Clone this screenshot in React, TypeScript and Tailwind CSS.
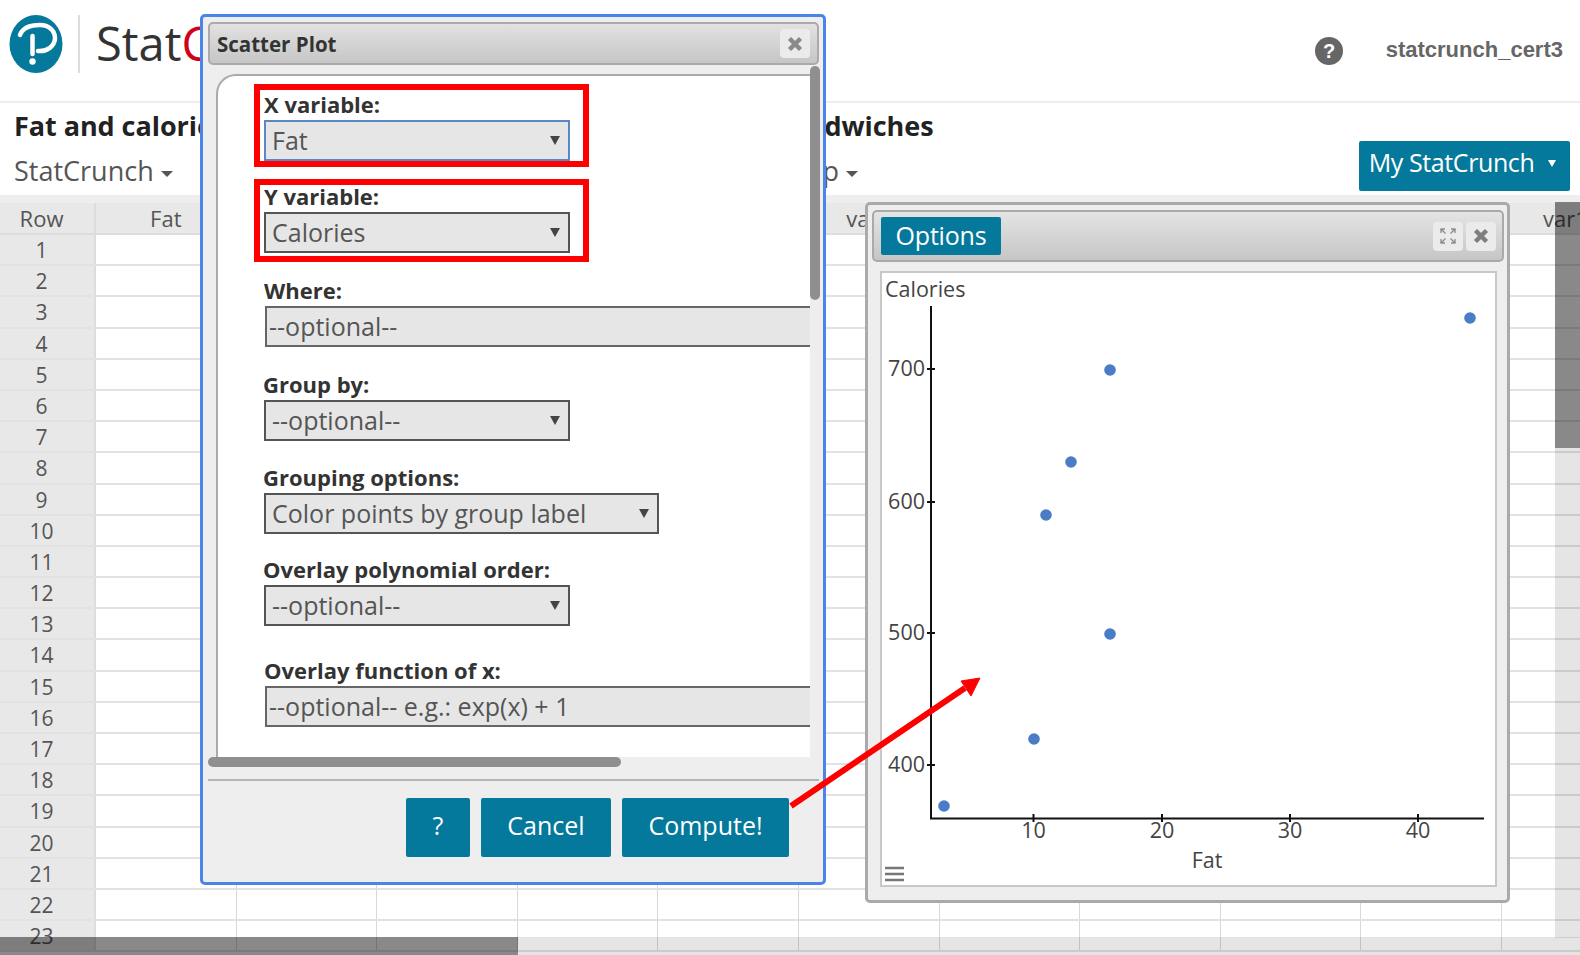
const rows = Array.from({ length: 23 }, (_, i) => i + 1);
const cols = ["Fat", "Calories", "var3", "var4", "var5", "var6", "var7", "var8", "var9", "var10", "var11"];
const points = [
  [1470, 318],
  [1110, 370],
  [1071, 462],
  [1046, 515],
  [1110, 634],
  [1034, 739],
  [944, 806],
];

function Caret() {
  return <span className="ml-[7px] inline-block border-x-[6px] border-t-[6px] border-x-transparent border-t-[#555] align-middle" />;
}

function CloseX({ color = "#8a8a8a" }: { color?: string }) {
  return (
    <svg width="16" height="16" viewBox="0 0 16 16">
      <path d="M2.5 2.5 13.5 13.5M13.5 2.5 2.5 13.5" stroke={color} strokeWidth="4.5" />
    </svg>
  );
}

function Field({ label, value, className, width, arrow = true, focus = false, boxed = false }: { label: string; value: string; className?: string; width?: string; arrow?: boolean; focus?: boolean; boxed?: boolean }) {
  return (
    <div className={className}>
      <div className={`h-[25px] text-[22px] leading-[19px] font-bold text-[#333] whitespace-nowrap ${boxed ? "" : "-ml-[1px]"}`}>{label}</div>
      <div
        className={`flex h-[41px] items-center justify-between bg-[#e6e6e6] pl-[6px] pr-[8px] text-[25px] text-[#555] whitespace-nowrap ${width ?? "w-[306px]"} ${
          focus ? "border-2 border-[#5b86c8]" : arrow ? "border-2 border-[#555]" : "border-y-2 border-l-2 border-y-[#666] border-l-[#666]"
        }`}
      >
        <span className={arrow ? "" : "-ml-[4px]"}>{value}</span>
        {arrow && <span className="border-x-[5px] border-t-[9px] border-x-transparent border-t-[#444]" />}
      </div>
    </div>
  );
}

function RedBox({ className, children }: { className?: string; children: React.ReactNode }) {
  return <div className={`h-[83px] w-[335px] border-[6px] border-[#ff0000] pl-[4px] ${className ?? ""}`}>{children}</div>;
}

function DialogButton({ label, width }: { label: string; width: string }) {
  return <div className={`flex h-[59px] items-center justify-center rounded-[2px] bg-[#04799b] pb-[3px] text-[25px] text-white ${width}`}>{label}</div>;
}

export default function App() {
  return (
    <div className="relative h-[955px] w-[1580px] overflow-hidden bg-white font-['Open_Sans',sans-serif]">
      {/* Header */}
      <div className="flex h-[103px] items-center border-b-2 border-[#eee] pb-[14px]">
        <svg className="ml-[9px]" width="54" height="60" viewBox="0 0 54 60">
          <ellipse cx="27" cy="30" rx="26.5" ry="29" fill="#04799b" />
          <path d="M11 21C14 13 23 11 31 11 40 11 46 17 46 24 46 32 38 38 29 37" fill="none" stroke="#fff" strokeWidth="4.5" strokeLinecap="round" />
          <path d="M23.5 22V40" fill="none" stroke="#fff" strokeWidth="4.5" strokeLinecap="round" />
          <circle cx="23.5" cy="47.5" r="3.2" fill="#fff" />
        </svg>
        <div className="ml-[15px] h-[58px] w-[2px] bg-[#ddd]" />
        <div className="ml-[16px] text-[47px] leading-none font-normal text-[#333]">
          Stat<span className="text-[#d0021b]">Crunch</span>
        </div>
        <div className="ml-auto mt-[12px] flex items-center">
          <svg className="mt-[2px]" width="30" height="28" viewBox="0 0 30 28">
            <ellipse cx="15" cy="14" rx="14" ry="14" fill="#666" />
            <text x="15" y="21" textAnchor="middle" fill="#fff" fontSize="20" fontWeight="700" fontFamily="Liberation Sans">?</text>
          </svg>
          <span className="ml-[42px] mr-[17px] font-['Liberation_Sans',sans-serif] text-[22px] font-bold text-[#666]">statcrunch_cert3</span>
        </div>
      </div>

      {/* Title and menu */}
      <div className="relative h-[92px]">
        <div className="pl-[14px] pt-[3px] text-[27px] leading-[40px] font-bold tracking-[-0.05px] text-[#222] whitespace-nowrap">Fat and calories for a sample of fast food and restaurant sandwiches</div>
        <div className="flex pl-[14px] pt-[7px] text-[27px] leading-[36px] text-[#555] whitespace-nowrap">
          <span>StatCrunch<Caret /></span>
          <span className="ml-[608px]">Help<Caret /></span>
        </div>
        <div className="absolute right-[10px] top-[38px] flex h-[50px] w-[211px] items-center justify-center rounded-[2px] bg-[#04799b] pb-[6px] pr-[4px] text-[25px] tracking-[-0.4px] text-white">
          My StatCrunch
          <span className="ml-[14px] border-x-[4px] border-t-[7px] border-x-transparent border-t-white" />
        </div>
      </div>

      {/* Data table */}
      <div className="h-[8px] bg-[#eee]" />
      <div className="flex h-[32px] border-b-2 border-[#ddd] bg-[#e8e8e8] text-[22px] leading-[31px] text-[#555]">
        <div className="w-[96px] shrink-0 border-r-2 border-[#ddd] pr-[11px] text-center">Row</div>
        {cols.map((c) => (
          <div key={c} className="w-[140.6px] shrink-0 border-r border-[#ddd] text-center">{c}</div>
        ))}
      </div>
      {rows.map((r) => (
        <div key={r} className="flex h-[31.2px] border-b-2 border-[#e2e2e2]">
          <div className="w-[96px] shrink-0 border-r-2 border-[#ddd] bg-[#e8e8e8] pr-[11px] text-center text-[21px] leading-[30px] text-[#555]">{r}</div>
          {cols.map((c) => (
            <div key={c} className="w-[140.6px] shrink-0 border-r border-[#d8d8d8]" />
          ))}
        </div>
      ))}

      {/* Sheet scrollbars */}
      <div className="absolute bottom-0 left-0 h-[18px] w-full bg-black/10" />
      <div className="absolute bottom-0 left-0 h-[18px] w-[518px] bg-black/40" />
      <div className="absolute right-0 top-[202px] h-[736px] w-[25px] bg-black/10" />
      <div className="absolute right-0 top-[202px] h-[246px] w-[25px] bg-black/40" />

      {/* Scatter Plot dialog */}
      <div className="absolute left-[200px] top-[14px] h-[871px] w-[626px] rounded-[5px] border-[3px] border-[#4a86e8] bg-[#eee]">
        <div className="ml-[5px] mt-[5px] flex h-[43px] w-[611px] items-center justify-between rounded-[5px] border-2 border-[#aaa] bg-gradient-to-b from-[#e2e2e2] to-[#c6c6c6] pl-[7px] pr-[7px]">
          <span className="pt-[2px] text-[20.5px] font-bold text-[#333]">Scatter Plot</span>
          <div className="flex h-[29px] w-[30px] items-center justify-center rounded-[4px] bg-[#ebebeb]"><CloseX /></div>
        </div>
        <div className="ml-[13px] mt-[9px] h-[683px] w-[594px] overflow-hidden rounded-tl-[20px] border-l-2 border-t-2 border-[#aaa] bg-white pl-[36px] pt-[8px]">
          <RedBox>
            <Field label="X variable:" value="Fat" className="mt-[5px]" focus boxed />
          </RedBox>
          <RedBox className="mt-[12px]">
            <Field label="Y variable:" value="Calories" className="mt-[2px]" boxed />
          </RedBox>
          <Field label="Where:" value="--optional--" className="ml-[11px] mt-[19px]" width="w-[560px]" arrow={false} />
          <Field label="Group by:" value="--optional--" className="ml-[10px] mt-[28px]" />
          <Field label="Grouping options:" value="Color points by group label" className="ml-[10px] mt-[27px]" width="w-[395px]" />
          <Field label="Overlay polynomial order:" value="--optional--" className="ml-[10px] mt-[26px]" />
          <Field label="Overlay function of x:" value="--optional-- e.g.: exp(x) + 1" className="ml-[11px] mt-[35px]" width="w-[560px]" arrow={false} />
        </div>
        <div className="ml-[5px] h-[10px] w-[413px] rounded-full bg-[#8f8f8f]" />
        <div className="ml-[5px] mt-[12px] h-[2px] w-[611px] bg-[#b5b5b5]" />
        <div className="mt-[17px] flex justify-end gap-[11px] pr-[34px]">
          <DialogButton label="?" width="w-[64px]" />
          <DialogButton label="Cancel" width="w-[130px]" />
          <DialogButton label="Compute!" width="w-[167px]" />
        </div>
        <div className="absolute left-[607px] top-[49px] h-[234px] w-[10px] rounded-full bg-[#8f8f8f]" />
      </div>

      {/* Options window with the graph */}
      <div className="absolute left-[865px] top-[202px] flex h-[701px] w-[645px] flex-col rounded-[5px] border-[3px] border-[#aaa] bg-[#eee] px-[4px] pt-[5px]">
        <div className="flex h-[52px] w-[632px] shrink-0 items-center rounded-[5px] border-2 border-[#aaa] bg-gradient-to-b from-[#e4e4e4] to-[#c6c6c6] pl-[7px] pr-[6px]">
          <div className="flex h-[38px] w-[120px] items-center justify-center rounded-[2px] bg-[#04799b] text-[25px] tracking-[-0.2px] text-white">Options</div>
          <div className="ml-auto flex h-[29px] w-[30px] items-center justify-center rounded-[4px] bg-[#ebebeb]">
            <svg width="16" height="16" viewBox="0 0 16 16" stroke="#8a8a8a" strokeWidth="1.3" fill="none">
              <path d="M1 5V1H5M11 1H15V5M15 11V15H11M5 15H1V11M1 1 5.5 5.5M15 1 10.5 5.5M15 15 10.5 10.5M1 15 5.5 10.5" />
            </svg>
          </div>
          <div className="ml-[3px] flex h-[29px] w-[30px] items-center justify-center rounded-[4px] bg-[#ebebeb]"><CloseX color="#7e7e7e" /></div>
        </div>
        <div className="ml-[8px] mt-[9px] h-[616px] w-[617px] border-2 border-[#c8c8c8] bg-white">
          <svg width="613" height="612" viewBox="882 273 613 612" fontFamily="Open Sans" fontSize="21.5" fill="#444">
            <text x="885" y="297">Calories</text>
            <path d="M931 306V818.5H1484" fill="none" stroke="#111" strokeWidth="2" />
            {[[700, 369], [600, 502], [500, 633], [400, 765]].map(([v, y]) => (
              <g key={v}>
                <path d={`M927 ${y}H935`} stroke="#111" strokeWidth="2" />
                <text x="925" y={y + 7} textAnchor="end">{v}</text>
              </g>
            ))}
            {[[10, 1033.5], [20, 1162], [30, 1290], [40, 1418]].map(([v, x]) => (
              <g key={v}>
                <path d={`M${x} 814V822`} stroke="#111" strokeWidth="2" />
                <text x={x} y="838" textAnchor="middle">{v}</text>
              </g>
            ))}
            <text x="1207" y="868" textAnchor="middle">Fat</text>
            {points.map(([x, y]) => (
              <circle key={x + "-" + y} cx={x} cy={y} r="5.8" fill="#4a7cc7" />
            ))}
            <path d="M885 868H904M885 874H904M885 880H904" stroke="#777" strokeWidth="2.5" />
          </svg>
        </div>
      </div>

      {/* Red arrow from Compute! to the graph */}
      <svg className="pointer-events-none absolute left-[780px] top-[670px]" width="210" height="145" viewBox="780 670 210 145">
        <path d="M791 806 965 688" stroke="#ff0000" strokeWidth="6" fill="none" />
        <path d="M980 678 961 681 971 696Z" fill="#ff0000" stroke="#ff0000" strokeWidth="1" />
      </svg>
    </div>
  );
}
